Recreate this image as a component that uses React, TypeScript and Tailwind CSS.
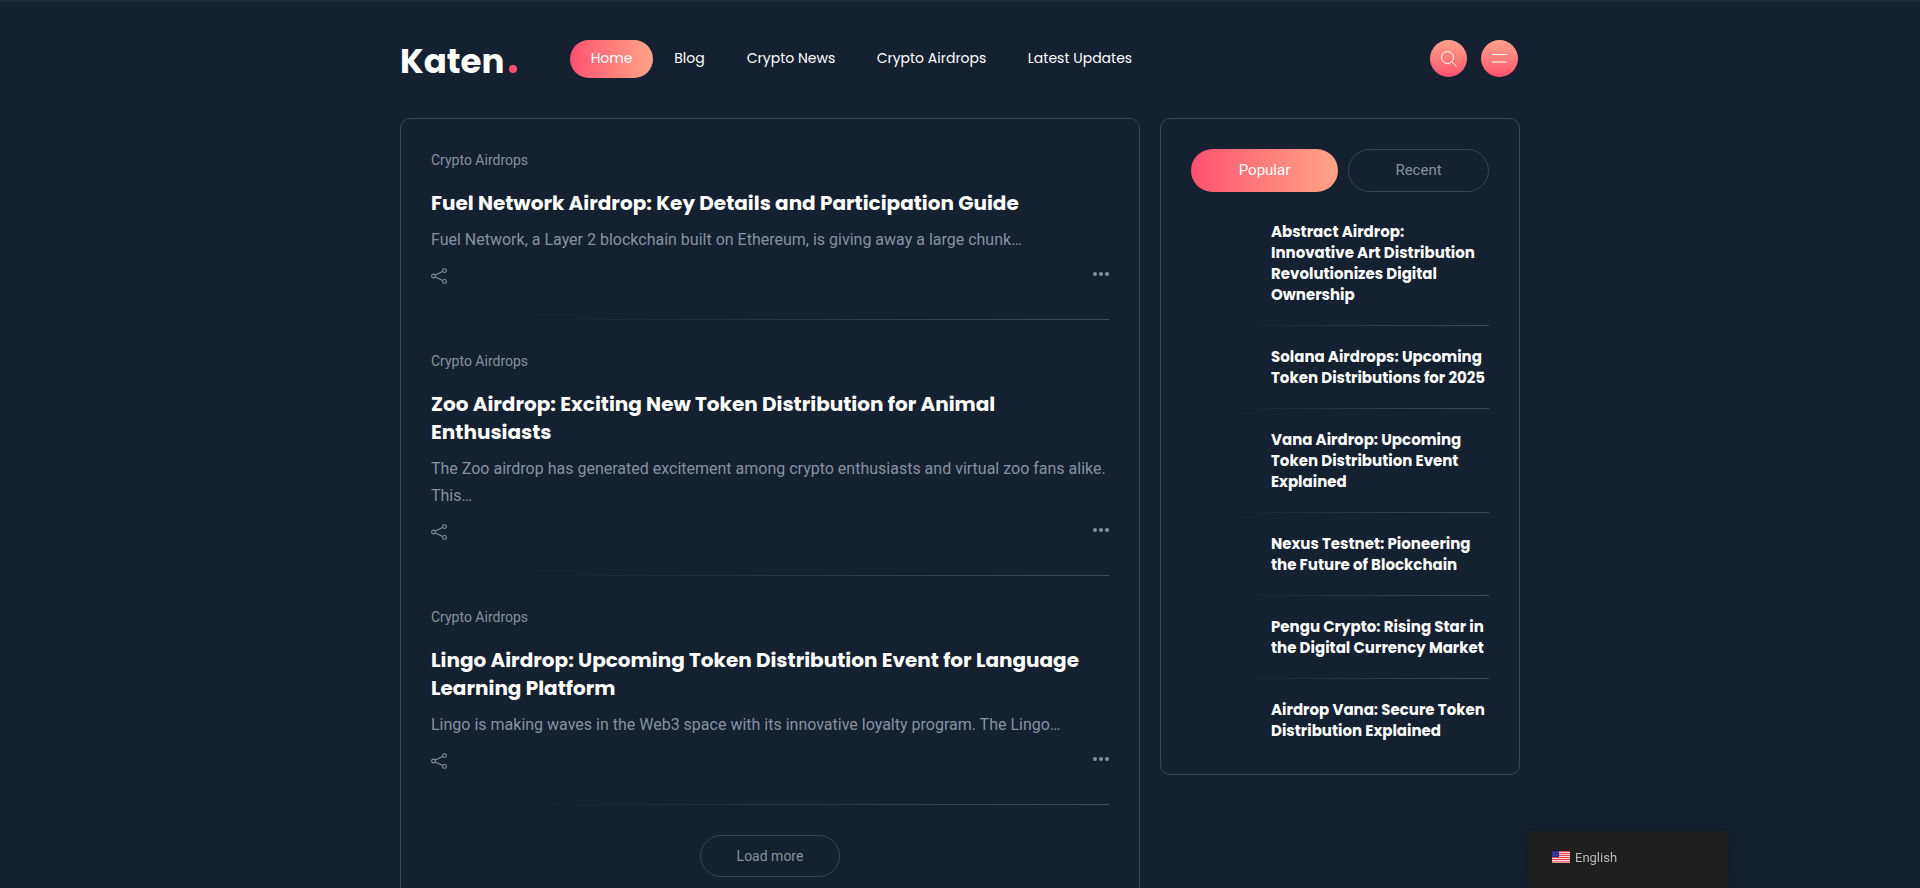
import React from 'react';

const NAVIGATION = [
  { href: '#home', label: 'Home', width: 'w-[83px]' },
  { href: '#blog', label: 'Blog', width: 'w-[73px]' },
  { href: '#crypto-news', label: 'Crypto News', width: 'w-[130px]' },
  { href: '#crypto-airdrops', label: 'Crypto Airdrops', width: 'w-[151px]' },
  { href: '#latest-updates', label: 'Latest Updates', width: 'w-[146px]' },
];

const POSTS = [
  {
    title: ['Fuel Network Airdrop: Key Details and Participation Guide'],
    excerpt: 'Fuel Network, a Layer 2 blockchain built on Ethereum, is giving away a large chunk…',
  },
  {
    title: ['Zoo Airdrop: Exciting New Token Distribution for Animal', 'Enthusiasts'],
    excerpt:
      'The Zoo airdrop has generated excitement among crypto enthusiasts and virtual zoo fans alike. This…',
  },
  {
    title: ['Lingo Airdrop: Upcoming Token Distribution Event for Language', 'Learning Platform'],
    excerpt: 'Lingo is making waves in the Web3 space with its innovative loyalty program. The Lingo…',
  },
];

const POPULAR = [
  ['Abstract Airdrop:', 'Innovative Art Distribution', 'Revolutionizes Digital', 'Ownership'],
  ['Solana Airdrops: Upcoming', 'Token Distributions for 2025'],
  ['Vana Airdrop: Upcoming', 'Token Distribution Event', 'Explained'],
  ['Nexus Testnet: Pioneering', 'the Future of Blockchain'],
  ['Pengu Crypto: Rising Star in', 'the Digital Currency Market'],
  ['Airdrop Vana: Secure Token', 'Distribution Explained'],
];

function Lines({ lines }: { lines: string[] }) {
  return (
    <>
      {lines.map((line) => (
        <span key={line} className="block whitespace-nowrap">
          {line}{' '}
        </span>
      ))}
    </>
  );
}

function Divider() {
  return <div className="h-px bg-linear-to-r from-transparent from-10% to-[#414d5a]" />;
}

function ShareIcon() {
  return (
    <svg viewBox="0 0 16 16" className="size-4" fill="none" stroke="currentColor" strokeWidth="1.1">
      <circle cx="2.5" cy="8" r="1.9" />
      <circle cx="13.5" cy="2.6" r="1.9" />
      <circle cx="13.5" cy="13.4" r="1.9" />
      <path d="M4.3 7.1 11.7 3.5M4.3 8.9l7.4 3.6" />
    </svg>
  );
}

function FlagIcon() {
  return (
    <svg viewBox="0 0 18 12" className="h-3 w-[18px]">
      <rect width="18" height="12" fill="#f6d5d8" />
      <path d="M0 .5h18M0 2.5h18M0 4.5h18M0 6.5h18M0 8.5h18M0 11h18" stroke="#e5404c" />
      <rect width="7" height="6" fill="#2c2f8f" />
      <path d="M1 1.5h5M1 3h5M1 4.5h5" stroke="#7f83c4" strokeWidth=".5" strokeDasharray=".6 .8" />
    </svg>
  );
}

function Header() {
  return (
    <header className="flex items-start pt-[38px] pb-[38px]">
      <a
        href="#home"
        className="mr-[53px] flex h-10 w-[117px] items-baseline gap-[5px] text-[34px] leading-[42px] font-bold text-white"
      >
        Katen
        <span className="size-2 shrink-0 rounded-full bg-[#fe4f70]" />
      </a>
      <nav className="flex text-sm text-white">
        {NAVIGATION.map((item, i) => (
          <a
            key={item.href}
            href={item.href}
            className={`flex h-[38px] items-center justify-center rounded-full pb-0.5 whitespace-nowrap ${item.width} ${
              i === 0 ? 'bg-linear-to-r from-[#fe4f70] to-[#ffa387]' : ''
            }`}
          >
            {item.label}
          </a>
        ))}
      </nav>
      <div className="mr-0.5 ml-auto flex gap-3.5 text-white">
        <button
          aria-label="Search"
          className="flex size-[37px] items-center justify-center rounded-full bg-linear-to-t from-[#fe4f70] to-[#ffa387]"
        >
          <svg viewBox="0 0 16 16" className="size-4" fill="none" stroke="currentColor">
            <circle cx="6.5" cy="6.5" r="6" />
            <path d="m10.8 10.8 4.8 4.8" />
          </svg>
        </button>
        <button
          aria-label="Menu"
          className="flex size-[37px] items-center justify-center rounded-full bg-linear-to-t from-[#fe4f70] to-[#ffa387]"
        >
          <svg viewBox="0 0 15 9" className="h-[9px] w-[15px]" stroke="currentColor">
            <path d="M0 .5h15M0 8h15" />
          </svg>
        </button>
      </div>
    </header>
  );
}

export default function App() {
  const [tab, setTab] = React.useState('Popular');

  return (
    <div className="min-h-screen border-t-2 border-[#1e2a39] bg-[#152030] pb-12 font-[Roboto,sans-serif] text-[#8792a1]">
      <div className="mx-auto max-w-[1120px]">
        <div className="font-[Poppins,Inter,sans-serif]">
          <Header />
        </div>

        <div className="grid grid-cols-[minmax(0,1fr)_360px] items-start gap-5">
          <main className="rounded-[10px] border border-[#3b4754] p-[30px]">
            {POSTS.map((post) => (
              <article key={post.title[0]} className="mb-[30px]">
                <a href="#crypto-airdrops" className="block text-sm leading-[22px]">
                  Crypto Airdrops
                </a>
                <h2 className="mt-[18px] font-[Poppins,Inter,sans-serif] text-xl leading-7 font-bold text-white">
                  <a href="#post">
                    <Lines lines={post.title} />
                  </a>
                </h2>
                <p className="mt-[9px] text-base leading-[27px]">{post.excerpt}</p>
                <div className="mt-[15px] mb-[35px] flex h-4 justify-between">
                  <button aria-label="Share">
                    <ShareIcon />
                  </button>
                  <a href="#post" aria-label="Read more" className="pt-1">
                    <svg viewBox="0 0 16 4" className="h-1 w-4" fill="currentColor">
                      <circle cx="2" cy="2" r="2" />
                      <circle cx="8" cy="2" r="2" />
                      <circle cx="14" cy="2" r="2" />
                    </svg>
                  </a>
                </div>
                <Divider />
              </article>
            ))}
            <button className="mx-auto block h-[42px] w-[140px] rounded-full border border-[#3b4754] text-sm">
              Load more
            </button>
          </main>

          <aside className="rounded-[10px] border border-[#3b4754] p-[30px] pb-[33px]">
            <div className="flex gap-2.5 text-[15px]">
              {['Popular', 'Recent'].map((label) => (
                <button
                  key={label}
                  onClick={() => setTab(label)}
                  className={`h-[43px] rounded-full ${label === 'Popular' ? 'w-[147px]' : 'flex-1'} ${
                    tab === label
                      ? 'bg-linear-to-r from-[#fe4f70] to-[#ffa387] text-white'
                      : 'border border-[#3b4754]'
                  }`}
                >
                  {label}
                </button>
              ))}
            </div>
            <ul className="mt-[29px]">
              {POPULAR.map((lines, i) => (
                <li key={lines[0]}>
                  {i > 0 && (
                    <div className="py-5">
                      <Divider />
                    </div>
                  )}
                  <h3 className="pl-20 font-[Poppins,Inter,sans-serif] text-[15px] leading-[21px] font-bold text-white">
                    <a href="#post">
                      <Lines lines={lines} />
                    </a>
                  </h3>
                </li>
              ))}
            </ul>
          </aside>
        </div>
      </div>

      <button className="fixed right-48 bottom-0 flex h-[57px] w-[200px] items-start gap-[5px] bg-[#1f1f1f] px-6 pt-4 text-[13px] leading-[22px] text-[#bbbbbb] shadow-[0_0_12px_rgba(0,0,0,0.25)]">
        <span className="pt-1">
          <FlagIcon />
        </span>
        English
      </button>
    </div>
  );
}
